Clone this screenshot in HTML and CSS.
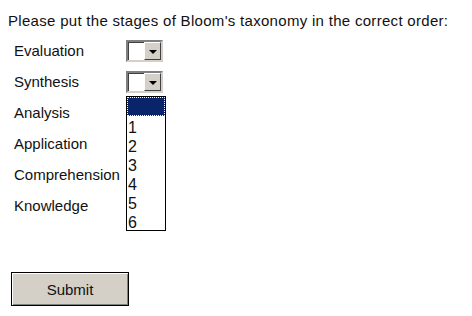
FILE: index.html
```html
<!DOCTYPE html>
<html>
    <head>
        <meta charset="UTF-8" />
        <title>Bloom's Taxonomy Quiz</title>
        <link rel="stylesheet" href="styles.css">
    </head>
    <body>
        <form class="quiz">
            <p class="question">Please put the stages of Bloom's taxonomy in the correct order:</p>
            <div class="stages">
                <span class="stage">Evaluation</span>
                <div class="combo"><span class="combo-field"></span><span class="combo-btn"></span></div>
                <span class="stage">Synthesis</span>
                <div class="combo open">
                    <span class="combo-field"></span><span class="combo-btn"></span>
                    <ul class="combo-list">
                        <li class="selected"></li>
                        <li>1</li>
                        <li>2</li>
                        <li>3</li>
                        <li>4</li>
                        <li>5</li>
                        <li>6</li>
                    </ul>
                </div>
                <span class="stage">Analysis</span>
                <div class="combo hidden"></div>
                <span class="stage">Application</span>
                <div class="combo hidden"></div>
                <span class="stage">Comprehension</span>
                <div class="combo hidden"></div>
                <span class="stage">Knowledge</span>
                <div class="combo hidden"></div>
            </div>
            <button type="button" class="submit">Submit</button>
        </form>
    </body>
</html>
```

FILE: styles.css
```css
body {
    margin: 0;
    background: #fff;
    color: #111;
    font-family: "Liberation Sans", Arial, sans-serif;
    font-size: 15px;
}

.quiz {
    padding: 12px 0 0 8px;
}

.question {
    margin: 0;
    line-height: 17px;
    letter-spacing: 0.3px;
}

.stages {
    display: grid;
    grid-template-columns: 112px 40px;
    grid-auto-rows: 31px;
    align-items: center;
    margin: 6px 0 0 6px;
}

.combo {
    position: relative;
    display: flex;
    width: 37px;
    height: 22px;
    box-sizing: border-box;
    border: 2px solid;
    border-color: #808080 #d4d0c8 #d4d0c8 #808080;
    background: #fff;
}

.combo.hidden {
    visibility: hidden;
}

.combo-field {
    flex: 1;
    border-top: 1px solid #404040;
    border-left: 1px solid #404040;
}

.combo-btn {
    position: relative;
    width: 17px;
    background: #d4d0c8;
    border: 1px solid;
    border-color: #fff #404040 #404040 #fff;
    box-sizing: border-box;
}

.combo-btn::after {
    content: "";
    position: absolute;
    left: 4px;
    top: 7px;
    border-left: 4px solid transparent;
    border-right: 4px solid transparent;
    border-top: 4px solid #000;
}

.combo-list {
    position: absolute;
    left: -2px;
    top: 23px;
    width: 38px;
    margin: 0;
    padding: 0;
    list-style: none;
    background: #fff;
    border: 1px solid #000;
    z-index: 2;
}

.combo-list li {
    height: 19px;
    line-height: 24px;
    padding-left: 1px;
    box-sizing: border-box;
    font-size: 16px;
}

.combo-list li.selected {
    background: #0a246a;
    outline: 1px dotted #fff;
    outline-offset: -1px;
}

.submit {
    display: block;
    margin: 51px 0 0 3px;
    width: 118px;
    height: 34px;
    font-family: "Liberation Sans", Arial, sans-serif;
    font-size: 15px;
    color: #111;
    background: #d4d0c8;
    border: 1px solid #000;
    box-shadow: inset 1px 1px 0 #fff, inset -1px -1px 0 #808080;
}
```
